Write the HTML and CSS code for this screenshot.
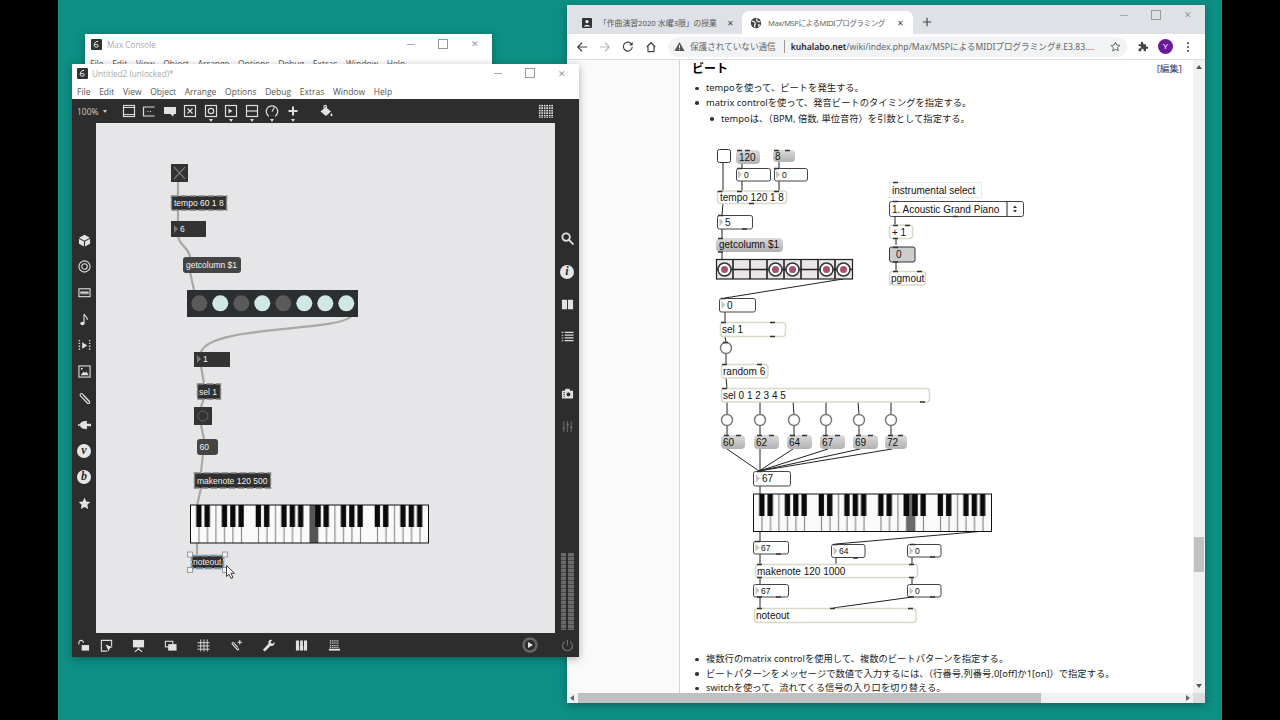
FILE: index.html
```html
<!DOCTYPE html>
<html lang="en">
<head>
    <meta charset="UTF-8">
    <meta name="viewport" content="width=device-width, initial-scale=1.0">
    <title>Max and browser</title>
    <link rel="stylesheet" href="styles.css">
</head>
<body>
    <div class="desktop">

        <!-- Max Console, mostly hidden behind the patcher -->
        <div class="window console-window">
            <div class="titlebar">
                <svg class="max-logo" viewBox="0 0 11 11"><rect width="11" height="11" rx="1"/><path d="M7 2.5C5 2 3.2 4 3.2 6.3c0 1.6 2.2 2.5 3.6 1.4 1.2-1-.1-2.8-2.6-2.2"/></svg>
                <span class="win-title">Max Console</span>
                <div class="win-controls">
                    <span class="win-min"></span><span class="win-max"></span><span class="win-close">&#x2715;</span>
                </div>
            </div>
            <div class="menubar">
                <span>File</span><span>Edit</span><span>View</span><span>Object</span><span>Arrange</span><span>Options</span><span>Debug</span><span>Extras</span><span>Window</span><span>Help</span>
            </div>
        </div>

        <!-- Browser -->
        <div class="window browser">
            <div class="tabstrip">
                <div class="tab">
                    <svg class="tab-icon" viewBox="0 0 12 12"><rect x="1" y="1" width="10" height="10" rx="1" fill="#333"/><circle cx="6" cy="4.6" r="1.6" fill="#fff"/><path d="M3 9.5c.4-2 5.6-2 6 0z" fill="#fff"/></svg>
                    <span class="tab-text">「作曲演習2020 水曜3限」の授業</span>
                    <span class="tab-close">&#x2715;</span>
                </div>
                <div class="tab active">
                    <svg class="tab-icon" viewBox="0 0 12 12"><circle cx="6" cy="6" r="5.2" fill="#444"/><path d="M2 4l2.5 1 1 2-1 1 .5 2.5M7 1.5 6.5 3.5l2 1.5 2-.5M8 7.5l1.5.5-1 2" stroke="#fff" stroke-width="1.1" fill="none"/></svg>
                    <span class="tab-text">Max/MSPによるMIDIプログラミング</span>
                    <span class="tab-close">&#x2715;</span>
                </div>
                <svg class="new-tab" viewBox="0 0 12 12"><path d="M6 1v10M1 6h10"/></svg>
                <div class="win-controls">
                    <span class="win-min"></span><span class="win-max"></span><span class="win-close">&#x2715;</span>
                </div>
            </div>

            <div class="chrome-bar">
                <svg class="nav-btn" viewBox="0 0 14 14"><path d="M13 7H2M7 2 2 7l5 5"/></svg>
                <svg class="nav-btn off" viewBox="0 0 14 14"><path d="M1 7h11M7 2l5 5-5 5"/></svg>
                <svg class="nav-btn" viewBox="0 0 14 14"><path d="M11.5 4.2A5.2 5.2 0 1 0 12 7"/><path class="solid" d="M12.5 1v4.2H8.300z"/></svg>
                <svg class="nav-btn" viewBox="0 0 14 14"><path d="M2 7l5-5 5 5M3.5 6v6.5h7V6"/></svg>
                <div class="omnibox">
                    <svg class="warn" viewBox="0 0 12 12"><path d="M6 1l5.5 10H.5z" fill="#555"/><path d="M6 4.5v3.5M6 9v1" stroke="#fff"/></svg>
                    <span class="not-secure">保護されていない通信</span>
                    <span class="omni-sep"></span>
                    <span class="url"><b>kuhalabo.net</b>/wiki/index.php/Max/MSPによるMIDIプログラミング#.E3.83....</span>
                    <svg class="omni-star" viewBox="0 0 14 14"><path d="M7 1.5l1.700 3.600 3.900.5-2.900 2.700.8 3.900L7 10.800l-3.500 1.900.8-3.900L1.400 5.600l3.900-.5z"/></svg>
                </div>
                <svg class="ext-icon" viewBox="0 0 14 14"><path d="M5 2.5a1.500 1.500 0 0 1 3 0V4h3.500v3H13a1.500 1.500 0 0 1 0 3h-1.500v3H8.500v-1.500a1.500 1.500 0 0 0-3 0V13H2V9.500h1.500a1.500 1.500 0 0 0 0-3H2V4h3z"/></svg>
                <span class="avatar">Y</span>
                <svg class="kebab" viewBox="0 0 4 14"><circle cx="2" cy="2.5" r="1.2"/><circle cx="2" cy="7" r="1.2"/><circle cx="2" cy="11.5" r="1.2"/></svg>
            </div>

            <div class="viewport">
                <div class="page">
                    <div class="wiki-side"></div>
                    <div class="article">
                        <div class="heading-row">
                            <h2>ビート</h2>
                            <span class="edit-link">[編集]</span>
                        </div>
                        <ul class="bullets">
                            <li>tempoを使って、ビートを発生する。</li>
                            <li>matrix controlを使って、発音ビートのタイミングを指定する。
                                <ul>
                                    <li>tempoは、（BPM, 倍数, 単位音符）を引数として指定する。</li>
                                </ul>
                            </li>
                        </ul>

                        <svg class="patch-shot" viewBox="680 128 512 522">
                            <defs>
                                <linearGradient id="msgFill" x1="0" y1="0" x2="0" y2="1">
                                    <stop offset="0" stop-color="#dadada"/>
                                    <stop offset="1" stop-color="#b2b2b2"/>
                                </linearGradient>
                            </defs>
                            <path class="k-cord" d="M723 162V191M742 164V168M742 181V191M779 162V168M779 181V191M723 203L722 215M722 229V238M722 252V259M843 279L725 298M725 312V322M725 337L726 342M726 354V364M726 378L727 388M727 402V414M760 402V414M793 402L794 414M826 402V414M858 402L859 414M891 402V414M727 426V435M760 426V435M794 426V435M826 426V435M859 426V435M891 426V435M727 449L759 471M760 449V471M793 449L759 471M828 449L759 471M860 449L759 471M892 449L759 471M760 486V494M760 531V541M985 531L836 544M760 554V564M836 558V564M912 557V564M760 577V584M912 577V584M760 597V608M912 597L833 608"/>

                            <rect class="k-toggle" x="717.5" y="149.5" width="13" height="13" rx="2"/>
                            <rect class="k-msg" x="736" y="150" width="24" height="14" rx="4"/><text class="k-text" x="739" y="161">120</text>
                            <rect class="k-msg" x="773" y="150" width="22" height="12" rx="4"/><text class="k-text" x="775" y="160">8</text>
                            <rect class="k-num" x="736.5" y="168.5" width="34" height="12.5" rx="2"/><path class="k-tri" d="M738 170.5l4 4-4 4z"/><text class="k-small" x="744" y="178">0</text>
                            <rect class="k-num" x="774.5" y="168.5" width="33" height="12.5" rx="2"/><path class="k-tri" d="M776 170.5l4 4-4 4z"/><text class="k-small" x="782" y="178">0</text>
                            <rect class="k-box" x="717.5" y="191" width="69" height="12.5" rx="3"/><text class="k-text" x="720" y="201">tempo 120 1 8</text>
                            <rect class="k-num" x="717.5" y="215.5" width="35" height="13.5" rx="2"/><path class="k-tri" d="M719.5 218l4 4-4 4z"/><text class="k-text" x="725" y="226">5</text>
                            <rect class="k-msg" x="716" y="238" width="67" height="14" rx="4"/><text class="k-text" x="719" y="248">getcolumn $1</text>

                            <rect class="k-matrix" x="716.5" y="259.5" width="136" height="19.5"/>
                            <path class="k-grid" d="M716.5 269.500H852.5M733 259.5V279M750 259.5V279M767 259.5V279M784 259.5V279M801 259.5V279M818 259.5V279M835 259.5V279"/>
                            <g class="k-leds">
                                <circle cx="724.5" cy="269.5" r="6.5"/><circle cx="775.5" cy="269.5" r="6.5"/><circle cx="792.5" cy="269.5" r="6.5"/><circle cx="826.5" cy="269.5" r="6.5"/><circle cx="843.5" cy="269.5" r="6.5"/>
                            </g>
                            <g class="k-leds-on">
                                <circle cx="724.5" cy="269.5" r="3.5"/><circle cx="775.5" cy="269.5" r="3.5"/><circle cx="792.5" cy="269.5" r="3.5"/><circle cx="826.5" cy="269.5" r="3.5"/><circle cx="843.5" cy="269.5" r="3.5"/>
                            </g>

                            <rect class="k-num" x="719.5" y="298.5" width="36" height="13.5" rx="2"/><path class="k-tri" d="M721.5 301l4 4-4 4z"/><text class="k-text" x="727" y="309">0</text>
                            <rect class="k-box" x="720.5" y="322.5" width="65" height="14" rx="3"/><text class="k-text" x="722" y="333">sel 1</text>
                            <circle class="k-bang" cx="726" cy="348" r="5.5"/>
                            <rect class="k-box" x="721.5" y="364.5" width="46.5" height="13.5" rx="3"/><text class="k-text" x="723" y="375">random 6</text>
                            <rect class="k-box" x="721.5" y="388.5" width="208" height="13.5" rx="3"/><text class="k-text" x="723" y="399">sel 0 1 2 3 4 5</text>

                            <circle class="k-bang" cx="727" cy="420" r="5.5"/><circle class="k-bang" cx="760" cy="420" r="5.5"/><circle class="k-bang" cx="794" cy="420" r="5.5"/><circle class="k-bang" cx="826" cy="420" r="5.5"/><circle class="k-bang" cx="859" cy="420" r="5.5"/><circle class="k-bang" cx="891" cy="420" r="5.5"/>

                            <rect class="k-msg" x="721" y="435" width="24" height="14" rx="4"/><text class="k-text" x="723" y="446">60</text>
                            <rect class="k-msg" x="754" y="435" width="25" height="14" rx="4"/><text class="k-text" x="756" y="446">62</text>
                            <rect class="k-msg" x="787" y="435" width="25" height="14" rx="4"/><text class="k-text" x="789" y="446">64</text>
                            <rect class="k-msg" x="820" y="435" width="25" height="14" rx="4"/><text class="k-text" x="822" y="446">67</text>
                            <rect class="k-msg" x="853" y="435" width="25" height="14" rx="4"/><text class="k-text" x="855" y="446">69</text>
                            <rect class="k-msg" x="885" y="435" width="22" height="14" rx="4"/><text class="k-text" x="887" y="446">72</text>

                            <rect class="k-num" x="753.5" y="471.5" width="37" height="14.5" rx="2"/><path class="k-tri" d="M756 474.5l4 4-4 4z"/><text class="k-text" x="762" y="482">67</text>

                            <g transform="translate(753.5 494)">
                                <rect class="key-bed" width="238" height="37.5"/>
                                <rect class="key-down" x="153" width="8.5" height="37.5"/>
                                <path d="M150.3 0h5.300v22h-5.300zM158.700 0h5.300v22h-5.300z" fill="#0a0a0a"/>
                                <rect class="key-frame" width="238" height="37.5"/>
                            </g>

                            <rect class="k-num" x="753.5" y="541.5" width="35" height="12.5" rx="2"/><path class="k-tri" d="M755.5 543.5l4 4-4 4z"/><text class="k-small" x="761" y="551">67</text>
                            <rect class="k-num" x="831.5" y="544.5" width="33.5" height="13" rx="2"/><path class="k-tri" d="M833.5 547l4 4-4 4z"/><text class="k-small" x="839" y="554">64</text>
                            <rect class="k-num" x="907.5" y="544.5" width="33.5" height="12.5" rx="2"/><path class="k-tri" d="M909.5 547l4 4-4 4z"/><text class="k-small" x="915" y="554">0</text>
                            <rect class="k-box" x="755.5" y="564.5" width="162" height="13" rx="3"/><text class="k-text" x="757" y="574.5">makenote 120 1000</text>
                            <rect class="k-num" x="753.5" y="584.5" width="35" height="12.5" rx="2"/><path class="k-tri" d="M755.5 586.5l4 4-4 4z"/><text class="k-small" x="761" y="594">67</text>
                            <rect class="k-num" x="907.5" y="584.5" width="33.5" height="12.5" rx="2"/><path class="k-tri" d="M909.5 587l4 4-4 4z"/><text class="k-small" x="915" y="594">0</text>
                            <rect class="k-box" x="754.5" y="608.5" width="161.5" height="14" rx="3"/><text class="k-text" x="756" y="619">noteout</text>

                            <path class="k-ports" d="M717.5 191.5h5M737 191.5h5M774 191.5h5M737 150.5h5M745 150.5h5M774 150.5h5M785 150.5h5M737 168.5h5M774 168.5h5M749 203.5h5M718 215.5h5M742 229h5M718 238.5h5M718 252h5M721 298.5h5M721 322.5h5M770 322.5h5M770 336.5h5M723 342.5h5M722 364.5h5M757 364.5h5M722 388.5h5M920 402h5M724 435.5h5M736 435.5h5M757 435.5h5M769 435.5h5M790 435.5h5M802 435.5h5M823 435.5h5M835 435.5h5M856 435.5h5M868 435.5h5M888 435.5h5M898 435.5h5M757 471.5h5M755 541.5h5M776 554h5M833 544.5h5M853 558h5M910 544.5h5M930 557h5M757 564.5h5M909 564.5h5M757 577.5h5M909 577.5h5M757 597h5M776 597h5M909 597h5M930 597h5M757 608.5h5M830 608.5h5M908 608.5h5"/>

                            <rect class="k-comment" x="889.5" y="182.5" width="92" height="15"/><text class="k-text" x="892" y="194">instrumental select</text>
                            <rect class="k-num" x="889.5" y="201.5" width="134" height="15" rx="2"/><text class="k-text" x="892" y="212.5">1. Acoustic Grand Piano</text>
                            <path class="k-cord" d="M1007 201.5V216.5M895 216.5V225M896 238V245M896 262V271"/>
                            <path class="k-spin" d="M1015 205.5l-2 2.5h4zM1015 212.5l-2-2.5h4z"/>
                            <rect class="k-box" x="889.5" y="225" width="23" height="13.5" rx="3"/><text class="k-text" x="892" y="235.5">+ 1</text>
                            <rect class="k-gray-num" x="889.5" y="247" width="25.5" height="15" rx="2"/><text class="k-text" x="896" y="258">0</text>
                            <rect class="k-box" x="889.5" y="271.5" width="36" height="13.5" rx="3"/><text class="k-text" x="891" y="282">pgmout</text>
                            <path class="k-ports" d="M893 182.5h5M893 201.5h5M953 216.5h5M893 225.5h5M905 225.5h5M893 238.5h5M893 247.5h5M893 262h5M893 271.5h5M917 271.5h5"/>
                        </svg>

                        <ul class="bullets">
                            <li>複数行のmatrix controlを使用して、複数のビートパターンを指定する。</li>
                            <li>ビートパターンをメッセージで数値で入力するには、（行番号,列番号,0[off]か1[on]）で指定する。</li>
                            <li>switchを使って、流れてくる信号の入り口を切り替える。</li>
                        </ul>
                    </div>
                </div>
                <div class="v-scroll">
                    <span class="arrow-up"></span>
                    <span class="v-thumb"></span>
                    <span class="arrow-down"></span>
                </div>
                <div class="h-scroll">
                    <span class="arrow-left"></span>
                    <span class="h-thumb"></span>
                    <span class="arrow-right"></span>
                </div>
                <div class="scroll-corner"></div>
            </div>
        </div>

        <!-- Max patcher window -->
        <div class="window patcher">
            <div class="titlebar">
                <svg class="max-logo" viewBox="0 0 11 11"><rect width="11" height="11" rx="1"/><path d="M7 2.5C5 2 3.2 4 3.2 6.3c0 1.6 2.2 2.5 3.6 1.4 1.2-1-.1-2.8-2.6-2.2"/></svg>
                <span class="win-title">Untitled2 (unlocked)*</span>
                <div class="win-controls">
                    <span class="win-min"></span><span class="win-max"></span><span class="win-close">&#x2715;</span>
                </div>
            </div>
            <div class="menubar">
                <span>File</span><span>Edit</span><span>View</span><span>Object</span><span>Arrange</span><span>Options</span><span>Debug</span><span>Extras</span><span>Window</span><span>Help</span>
            </div>

            <div class="toolbar">
                <span class="zoom-label">100%</span>
                <span class="zoom-caret"></span>
                <div class="tools">
                    <span class="tool"><svg viewBox="0 0 14 14"><rect class="ln" x="1.5" y="1.5" width="11" height="11"/><path class="ln" d="M1.5 3.5h11M1.5 10.5h11"/></svg></span>
                    <span class="tool"><svg viewBox="0 0 14 14"><path class="ln" d="M12.5 3H1.5v9h11"/><path class="ln thin" d="M5.5 7.5h1M8 7.5h1"/></svg></span>
                    <span class="tool"><svg viewBox="0 0 14 14"><path class="fl" d="M1 3h12v7h-2l-1 2.5L7.5 10H1z"/></svg></span>
                    <span class="tool"><svg viewBox="0 0 14 14"><rect class="ln" x="1.5" y="1.5" width="11" height="11"/><path class="ln" d="M4.500 4.500l5 5M9.500 4.500l-5 5"/></svg></span>
                    <span class="tool more"><svg viewBox="0 0 14 14"><rect class="ln" x="1.5" y="1.5" width="11" height="11"/><circle class="ln" cx="7" cy="7" r="2.7"/></svg></span>
                    <span class="tool more"><svg viewBox="0 0 14 14"><rect class="ln" x="1.5" y="1.5" width="11" height="11"/><path class="fl" d="M4.5 4.5l4 2.5-4 2.5z"/></svg></span>
                    <span class="tool more"><svg viewBox="0 0 14 14"><rect class="ln" x="1.5" y="1.5" width="11" height="11"/><path class="ln" d="M1.5 7h11"/></svg></span>
                    <span class="tool more"><svg viewBox="0 0 14 14"><path class="ln" d="M3.8 12.2a5.7 5.7 0 1 1 6.4 0"/><path class="ln" d="M7 7.5 9.3 3.5"/></svg></span>
                    <span class="tool more"><svg viewBox="0 0 14 14"><path class="ln heavy" d="M7 2.5v9M2.5 7h9"/></svg></span>
                </div>
                <span class="tool paint"><svg viewBox="0 0 14 14"><path class="ln" d="M5 4V2.5c0-1.5 2.5-1.5 2.5 0V5"/><path class="fl" d="M6.5 3 12 7.5 7 12 1.5 7.5z"/><path class="fl" d="M12.5 9c.6 1 1 1.5 1 2.2a1 1 0 0 1-2 0c0-.7.4-1.2 1-2.200z"/></svg></span>
                <span class="matrix-icon"></span>
            </div>

            <div class="patcher-main">
                <div class="side-left">
                    <span class="side-icon"><svg viewBox="0 0 14 14"><path class="fl" d="M7 .8 1.2 4 7 7.2 12.800 4zM1 5v5.500l5.400 3V8zM13 5v5.500l-5.400 3V8z"/></svg></span>
                    <span class="side-icon"><svg viewBox="0 0 14 14"><circle class="ln" cx="7" cy="7" r="6"/><circle class="ln" cx="7" cy="7" r="3"/></svg></span>
                    <span class="side-icon"><svg viewBox="0 0 14 14"><rect class="ln" x="1" y="3" width="12" height="8.5"/><path class="fl dim" d="M2.5 5.5h9v3.500h-9z"/><path class="fl" d="M2.5 6.700h9v1h-9z"/></svg></span>
                    <span class="side-icon"><svg viewBox="0 0 14 14"><ellipse class="fl" cx="4.8" cy="11.3" rx="2.3" ry="1.9"/><path class="ln" d="M6.5 11V1c.5 2.500 4 3 3.500 6.500"/></svg></span>
                    <span class="side-icon"><svg viewBox="0 0 14 14"><path class="fl" d="M4.500 3.500 10 7l-5.500 3.500z"/><path class="ln dash" d="M1.5 1v12M12.5 1v12"/></svg></span>
                    <span class="side-icon"><svg viewBox="0 0 14 14"><rect class="ln" x="1" y="1" width="12" height="12"/><path class="fl" d="M3 11l3-4 1.500 1.500L9 7l2.500 4z"/><circle class="fl" cx="4" cy="4" r="1"/></svg></span>
                    <span class="side-icon"><svg viewBox="0 0 14 14"><path class="ln" d="M12.3 11 5 3.300C3.500 1.800 1.300 3.800 2.800 5.400l7.500 7.800c1.200 1.200 3-.6 1.800-1.900L5.500 4.500"/></svg></span>
                    <span class="side-icon"><svg viewBox="0 0 14 14"><path class="fl" d="M14 6.200H9.500V3L6 3.500C3.500 4 2.500 5.500 2.300 6.700H0v1.600h2.300C2.500 9.500 3.500 11 6 11.500l3.500.5V8.800H14z"/></svg></span>
                    <span class="side-icon"><span class="letter-disc">v</span></span>
                    <span class="side-icon"><span class="letter-disc">b</span></span>
                    <span class="side-icon"><svg viewBox="0 0 14 14"><path class="fl" d="M7 .8l1.900 4 4.400.6-3.200 3 .8 4.400L7 10.700l-3.900 2.100.8-4.400-3.200-3 4.400-.6z"/></svg></span>
                </div>

                <div class="canvas">
                    <svg class="patch-live" viewBox="96 123 459 510">
                        <defs>
                            <pattern id="octave" patternUnits="userSpaceOnUse" width="59.5" height="38">
                                <rect width="59.5" height="38" fill="#fafafa"/>
                                <path class="key-line" d="M8.500 0V38M17 0V38M25.500 0V38M34 0V38M42.500 0V38M51 0V38"/>
                                <path d="M5.700 0h5.300v22H5.700zM14 0h5.400v22H14zM31.300 0h5.300v22h-5.300zM39.700 0h5.300v22h-5.300zM48 0h5.300v22H48z" fill="#0a0a0a"/>
                            </pattern>
                        </defs>

                        <path class="g-cord" d="M178 180V195M178 210V221M178 236C180 247 189 247 190 257M190 272L194 290M351 316C340 332 210 325 201 352M201 366L204 383M204 398L201 407M201 425L204 439M203 454L201 472M201 488L197 506M197 541V555"/>

                        <rect class="d-obj" x="171" y="164" width="17" height="18"/>
                        <path class="x-mark" d="M174 167l11 12M185 167l-11 12"/>

                        <rect class="d-box" x="171.5" y="196" width="55" height="14"/><text class="d-text" x="174" y="206">tempo 60 1 8</text>
                        <rect class="d-obj" x="171" y="221" width="35" height="16"/><path class="d-tri" d="M174 225l4 4-4 4z"/><text class="d-text" x="180" y="232">6</text>
                        <rect class="d-msg" x="183" y="257" width="58" height="16" rx="3"/><text class="d-text" x="186" y="268">getcolumn $1</text>

                        <rect class="d-matrix" x="187" y="290" width="171" height="27"/>
                        <g class="led-off">
                            <circle cx="199.3" cy="303.3" r="8"/><circle cx="241.3" cy="303.3" r="8"/><circle cx="283.3" cy="303.3" r="8"/>
                        </g>
                        <g class="led-on">
                            <circle cx="220.3" cy="303.3" r="8"/><circle cx="262.3" cy="303.3" r="8"/><circle cx="304.3" cy="303.3" r="8"/><circle cx="325.3" cy="303.3" r="8"/><circle cx="346.3" cy="303.3" r="8"/>
                        </g>

                        <rect class="d-obj" x="194" y="352" width="36" height="15"/><path class="d-tri" d="M197 355l4 4-4 4z"/><text class="d-text" x="203" y="362">1</text>
                        <rect class="d-box" x="197.5" y="384" width="23" height="15"/><text class="d-text" x="199" y="394.5">sel 1</text>
                        <rect class="d-obj" x="194" y="407" width="18" height="18"/><circle class="d-bang" cx="203" cy="416" r="5"/>
                        <rect class="d-msg" x="197" y="439" width="21" height="16" rx="3"/><text class="d-text" x="199.5" y="450">60</text>
                        <rect class="d-box" x="194.5" y="473" width="76" height="15"/><text class="d-text" x="197" y="483.5">makenote 120 500</text>

                        <g transform="translate(190.5 505)">
                            <rect class="key-bed" width="238" height="38"/>
                            <rect class="key-pressed" x="119" width="8.5" height="38"/>
                            <path d="M124.700 0h5.300v22h-5.300z" fill="#0a0a0a"/>
                            <rect class="key-frame" width="238" height="38"/>
                        </g>

                        <rect class="sel-ring" x="190" y="554" width="35" height="16"/>
                        <rect class="d-box" x="192" y="556" width="31" height="12"/>
                        <text class="d-text" x="193" y="565">noteout</text>
                        <rect class="sel-handle" x="187.5" y="552" width="5" height="5"/>
                        <rect class="sel-handle" x="222.5" y="552" width="5" height="5"/>
                        <rect class="sel-handle" x="187.5" y="567.5" width="5" height="5"/>
                        <rect class="sel-handle" x="222.5" y="567.5" width="5" height="5"/>
                        <path class="pointer" d="M226.5 565.5v11l2.5-2.3 2 4.3 2-1-2-4.2h3.5z"/>
                    </svg>
                </div>

                <div class="side-right">
                    <span class="rail-icon"><svg viewBox="0 0 14 14"><circle class="ln heavy" cx="5.5" cy="5.5" r="4"/><path class="ln heavy" d="M8.5 8.5l5 5"/></svg></span>
                    <span class="rail-icon"><span class="letter-disc info">i</span></span>
                    <span class="rail-icon"><svg viewBox="0 0 14 14"><path class="fl" d="M1 2h5.500v10H1zM7.500 2H13v10H7.500z"/></svg></span>
                    <span class="rail-icon"><svg viewBox="0 0 14 14"><path class="ln list" d="M4 2.500h9.500M4 5.500h9.500M4 8.500h9.500M4 11.500h9.500"/><path class="fl" d="M.8 2h1.700v1.200H.8zM.8 5h1.700v1.200H.8zM.8 8h1.700v1.200H.8zM.8 11h1.700v1.200H.8z"/></svg></span>
                    <span class="rail-gap"></span>
                    <span class="rail-icon"><svg viewBox="0 0 14 14"><path class="fl" d="M1 4h3l1-2h4l1 2h3v8.500H1z"/><circle class="cutout" cx="8" cy="8" r="2.6"/><path class="cutout-ln" d="M2.500 6h1.500M2.500 8h1.500M2.500 10h1.500"/></svg></span>
                    <span class="rail-icon faint"><svg viewBox="0 0 14 14"><path class="ln" d="M3 1v12M7 1v12M11 1v12"/><path class="fl" d="M1.500 8h3v2h-3zM5.500 4h3v2h-3zM9.500 7h3v2h-3z"/></svg></span>
                    <div class="meters"><span></span><span></span></div>
                </div>
            </div>

            <div class="bottombar">
                <span class="bot-first"><svg viewBox="0 0 14 14"><path class="ln" d="M2 6V4a2.500 2.500 0 0 1 5 0"/><path class="fl" d="M5 6.500h8v6H5z"/></svg></span>
                <span class="bot-first"><svg viewBox="0 0 14 14"><path class="ln" d="M8 13H1.500V1.500h11V8"/><path class="fl" d="M6 6l7.500 3-3 1-1 3.500z"/></svg></span>
                <span class="bot-tool"><svg viewBox="0 0 14 14"><path class="fl" d="M1 1h12v8H1z"/><path class="ln" d="M7 9v1.500L3 14M7 10.500 11 14"/></svg></span>
                <span class="bot-tool"><svg viewBox="0 0 14 14"><rect class="ln" x="1.5" y="2.5" width="8" height="6"/><path class="fl" d="M4.500 5.500h9v7h-9z"/></svg></span>
                <span class="bot-tool"><svg viewBox="0 0 14 14"><path class="ln thin" d="M4 .5v13M7.500 .5v13M11 .5v13M.5 4h13M.5 7.500h13M.5 11h13"/></svg></span>
                <span class="bot-tool"><svg viewBox="0 0 14 14"><path class="ln" d="M8.500 9 4 4.200C3 3.200 1.500 4.500 2.500 5.500l5.300 5.800c.9.900 2.100-.3 1.300-1.200"/><path class="ln" d="M10.500 1v5M8 3.500h5"/></svg></span>
                <span class="bot-tool"><svg viewBox="0 0 14 14"><path class="fl" d="M13.500 3.200 11 5.500 9 3.500 11 1C8.500.2 6.200 2 7 5L1 11.500 3 13.500 9 7.500c3 .8 5-1.500 4.500-4.300z"/></svg></span>
                <span class="bot-tool"><svg viewBox="0 0 14 14"><path class="fl" d="M1 1.500h3.500v11H1zM5.300 1.500h3.400v11H5.300zM9.500 1.500H13v11H9.500z"/><path class="key-slit" d="M4.900 1.500v6M9.100 1.500v6"/></svg></span>
                <span class="bot-tool"><svg viewBox="0 0 14 14"><path class="ln dots" d="M2 2h10M2 4.500h10M2 7h10M2 9h10"/><path class="fl" d="M1 10.500h12v2H1z"/></svg></span>
                <span class="bot-play"><svg viewBox="0 0 16 16"><circle class="ln ring" cx="8" cy="8" r="6.5"/><path class="fl" d="M6 5l5 3-5 3z"/></svg></span>
                <span class="bot-power"><svg viewBox="0 0 14 14"><path class="ln" d="M4 3a5.300 5.300 0 1 0 6 0M7 1v6"/></svg></span>
            </div>
        </div>
    </div>
</body>
</html>
```

FILE: styles.css
```css
* {
    box-sizing: border-box;
}

body {
    margin: 0;
    background: #000;
    font-family: "Liberation Sans", Arial, sans-serif;
    overflow: hidden;
}

.desktop {
    position: relative;
    width: 1164px;
    height: 720px;
    margin-left: 58px;
    background: #0d8f84;
    overflow: hidden;
}

/* windows sit on the desktop at their own place */
.window {
    position: absolute;
    display: flex;
    flex-direction: column;
    background: #fff;
    box-shadow: 0 2px 8px rgba(0, 0, 0, 0.3);
}

.console-window {
    left: 27px;
    top: 34px;
    width: 407px;
    height: 40px;
}

.patcher {
    left: 14px;
    top: 64px;
    width: 507px;
    height: 593px;
    font-family: "Open Sans", sans-serif;
}

.browser {
    left: 509px;
    top: 5px;
    width: 638px;
    height: 698px;
}

/* Max title + menu */
.titlebar {
    display: flex;
    align-items: center;
    height: 18px;
    flex: none;
    padding-left: 5px;
}

.console-window .titlebar {
    height: 20px;
    padding-left: 6px;
}

.console-window .max-logo {
    margin-right: 5px;
}

.max-logo {
    width: 11px;
    height: 11px;
    margin-right: 4px;
    fill: #333;
}

.max-logo path {
    fill: none;
    stroke: #fff;
    stroke-width: 1;
}

.win-title {
    font-family: "Open Sans", sans-serif;
    font-size: 8.2px;
    color: #a9a9a9;
}

.win-controls {
    display: flex;
    margin-left: auto;
    padding-right: 1px;
    align-items: center;
}

.win-controls span {
    display: flex;
    align-items: center;
    justify-content: center;
    width: 32px;
    height: 10px;
    color: #999;
    font-size: 9px;
}

.win-min::before {
    content: "";
    width: 8px;
    height: 1px;
    background: #aaa;
}

.win-max::before {
    content: "";
    width: 8px;
    height: 8px;
    border: 1px solid #999;
}

.menubar {
    display: flex;
    align-items: center;
    gap: 8.7px;
    height: 17px;
    padding: 2px 0 0 5px;
    flex: none;
    font-family: "Open Sans", sans-serif;
    font-size: 8.5px;
    color: #555;
}

/* Max top toolbar */
.toolbar {
    display: flex;
    align-items: center;
    height: 24px;
    flex: none;
    padding-left: 5px;
    background: #2d2d2d;
    color: #ddd;
}

.zoom-label {
    font-size: 8.5px;
    color: #ccc;
}

.zoom-caret {
    width: 0;
    height: 0;
    margin-left: 4px;
    border-left: 2px solid transparent;
    border-right: 2px solid transparent;
    border-top: 3px solid #ccc;
}

.tools {
    display: flex;
    margin-left: 12px;
}

.tool {
    position: relative;
    display: flex;
    align-items: center;
    justify-content: center;
    width: 20.5px;
    height: 24px;
}

.tool svg {
    width: 14px;
    height: 14px;
}

.tool.more::after {
    content: "";
    position: absolute;
    left: 8px;
    bottom: 1px;
    border-left: 2.5px solid transparent;
    border-right: 2.5px solid transparent;
    border-top: 3px solid #ddd;
}

.tool.paint {
    margin-left: 13px;
}

.matrix-icon {
    width: 15px;
    height: 14px;
    margin-left: auto;
    margin-right: 26px;
    background-color: #ddd;
    background-image:
        linear-gradient(90deg, #2d2d2d 1px, transparent 1px),
        linear-gradient(#2d2d2d 1px, transparent 1px);
    background-size: 2.5px 2.5px;
}

/* shared icon parts */
.ln {
    fill: none;
    stroke: #ddd;
    stroke-width: 1.2;
}

.ln.thin {
    stroke-width: 1;
}

.ln.heavy {
    stroke-width: 2;
}

.ln.dash {
    stroke-dasharray: 1.5 1.5;
    stroke-width: 1.5;
}

.ln.dots {
    stroke-dasharray: 1.2 .8;
}

.ln.list {
    stroke-width: 1.3;
}

.ln.ring {
    stroke: #666;
    stroke-width: 2.5;
}

.fl {
    fill: #e2e2e2;
}

.fl.dim {
    fill: #999;
}

.cutout {
    fill: #2d2d2d;
    stroke: #e2e2e2;
}

.cutout-ln {
    stroke: #2d2d2d;
    fill: none;
}

.key-slit {
    stroke: #2d2d2d;
    stroke-width: 1.2;
    fill: none;
}

/* Max body */
.patcher-main {
    display: flex;
    flex: 1;
    min-height: 0;
}

.side-left,
.side-right {
    display: flex;
    flex-direction: column;
    align-items: center;
    width: 24px;
    flex: none;
    background: #2d2d2d;
}

.side-left {
    padding-top: 104px;
}

.side-icon {
    display: flex;
    align-items: center;
    justify-content: center;
    height: 26.3px;
}

.side-icon svg,
.rail-icon svg {
    width: 13px;
    height: 13px;
}

.letter-disc {
    display: flex;
    align-items: center;
    justify-content: center;
    width: 14px;
    height: 14px;
    border-radius: 50%;
    background: #e6e6e6;
    color: #2d2d2d;
    font-family: "Liberation Serif", serif;
    font-size: 12px;
    font-style: italic;
    font-weight: bold;
}

.side-right {
    padding-top: 99.5px;
}

.rail-icon {
    display: flex;
    align-items: center;
    justify-content: center;
    height: 32.7px;
}

.rail-gap {
    height: 24px;
}

.rail-icon.faint {
    opacity: 0.3;
}

.meters {
    display: flex;
    gap: 2px;
    margin-top: 110px;
}

.meters span {
    width: 5.5px;
    height: 77px;
    background: repeating-linear-gradient(#6a6a6a 0 3px, #4a4a4a 3px 4px);
}

.canvas {
    flex: 1;
    background: #e6e6e9;
}

.patch-live {
    display: block;
    width: 459px;
    height: 510px;
}

.bottombar {
    display: flex;
    align-items: center;
    height: 24px;
    flex: none;
    background: #2d2d2d;
}

.bottombar span {
    display: flex;
    align-items: center;
    justify-content: center;
}

.bottombar svg {
    width: 13px;
    height: 13px;
}

.bot-first {
    width: 23px;
}

.bot-tool {
    width: 32.7px;
}

.bot-first + .bot-tool {
    margin-left: 3.7px;
}

.bot-play {
    width: 24px;
    margin-left: auto;
    margin-right: 13px;
}

.bot-play svg {
    width: 16px;
    height: 16px;
}

.bot-power {
    width: 24px;
    opacity: 0.4;
}

.g-cord {
    fill: none;
    stroke: #a8a8a8;
    stroke-width: 2.2;
}

.d-obj {
    fill: #333;
}

.d-box {
    fill: #2f2f2f;
    stroke: #808080;
    stroke-width: 1.5;
    stroke-dasharray: 7 2;
}

.d-msg {
    fill: #444;
}

.d-text {
    fill: #f2f2f2;
    font-family: "Liberation Sans", Arial, sans-serif;
    font-size: 8.5px;
}

.d-tri {
    fill: #777;
}

.d-bang {
    fill: none;
    stroke: #666;
}

.x-mark {
    stroke: #777;
    stroke-width: 1.2;
}

.d-matrix {
    fill: #2c2f30;
}

.led-off {
    fill: #5a5a5a;
}

.led-on {
    fill: #cfe8e6;
}

.key-bed {
    fill: url(#octave);
}

.key-line {
    stroke: #777;
    stroke-width: 1;
    fill: none;
}

.key-frame {
    fill: none;
    stroke: #111;
    stroke-width: 1;
}

.key-pressed {
    fill: #555;
}

.key-down {
    fill: #6a6a6a;
}

.sel-ring {
    fill: #b4d0e6;
}

.sel-handle {
    fill: #f2f2f2;
    stroke: #888;
    stroke-width: 0.8;
}

.pointer {
    fill: #fff;
    stroke: #111;
    stroke-width: 0.8;
}

/* Chrome */
.tabstrip {
    display: flex;
    align-items: flex-end;
    height: 29px;
    flex: none;
    padding-left: 10px;
    background: #dee1e6;
    color: #555;
}

.tabstrip .win-controls {
    align-self: flex-start;
    margin-top: 5px;
}

.tab {
    display: flex;
    align-items: center;
    height: 23px;
    width: 165px;
    padding-left: 4px;
    font-family: "Noto Sans", "Noto Sans CJK JP", sans-serif;
    font-size: 7.8px;
}

.tab.active {
    width: 171px;
    padding-left: 8px;
    background: #fff;
    border-radius: 7px 7px 0 0;
}

.tab-icon {
    width: 12px;
    height: 12px;
    flex: none;
    margin-right: 6px;
}

.tab-text {
    white-space: nowrap;
    width: 125px;
}

.tab.active .tab-text {
    width: 126px;
    font-size: 7.5px;
    letter-spacing: -0.4px;
    color: #666;
}

.tab-close {
    font-size: 8px;
    margin-left: 3px;
    color: #444;
}

.new-tab {
    width: 10px;
    height: 10px;
    margin: 0 0 7px 9px;
    fill: none;
    stroke: #444;
    stroke-width: 1.4;
}

.chrome-bar {
    display: flex;
    align-items: center;
    height: 26px;
    flex: none;
    padding-left: 9px;
    background: #fff;
    border-bottom: 1px solid #dcdcdc;
}

.nav-btn {
    width: 12px;
    height: 12px;
    margin-right: 11px;
    fill: none;
    stroke: #444;
    stroke-width: 1.4;
}

.nav-btn.off {
    stroke: #bbb;
}

.nav-btn .solid {
    fill: #444;
    stroke: none;
}

.omnibox {
    display: flex;
    align-items: center;
    width: 459px;
    height: 20px;
    padding-left: 6px;
    background: #f1f3f4;
    border-radius: 10px;
    font-family: "Noto Sans", "Noto Sans CJK JP", sans-serif;
    white-space: nowrap;
}

.warn {
    width: 11px;
    height: 11px;
    flex: none;
    margin-right: 5px;
}

.not-secure {
    font-size: 8.6px;
    color: #666;
}

.omni-sep {
    width: 1px;
    height: 13px;
    margin: 0 6px 0 8px;
    background: #999;
}

.url {
    width: 305px;
    overflow: hidden;
    font-size: 8.6px;
    color: #666;
}

.url b {
    font-weight: 600;
    color: #222;
}

.omni-star {
    width: 11px;
    height: 11px;
    margin-left: 14px;
    fill: none;
    stroke: #444;
}

.ext-icon {
    width: 11px;
    height: 11px;
    margin-left: 10px;
    fill: #444;
}

.avatar {
    display: flex;
    align-items: center;
    justify-content: center;
    width: 15px;
    height: 15px;
    margin-left: 10px;
    border-radius: 50%;
    background: #6a1b9a;
    color: #fff;
    font-size: 8px;
}

.kebab {
    width: 4px;
    height: 12px;
    margin-left: 13px;
    fill: #444;
}

.viewport {
    display: grid;
    grid-template-columns: 1fr 12px;
    grid-template-rows: 1fr 10px;
    flex: 1;
    min-height: 0;
}

.page {
    display: flex;
    min-width: 0;
    overflow: hidden;
}

.wiki-side {
    width: 113px;
    flex: none;
    background: #fbfafb;
    border-right: 1px solid #d4d4d4;
}

.article {
    flex: 1;
    min-width: 0;
    padding: 1px 0 0 12px;
    font-family: "Noto Sans", "Noto Sans CJK JP", sans-serif;
    font-size: 9.3px;
    color: #222;
}

.heading-row {
    display: flex;
    align-items: center;
    justify-content: space-between;
    height: 14px;
    padding-right: 11px;
}

.heading-row h2 {
    margin: 0;
    font-size: 12px;
    font-weight: bold;
    color: #000;
}

.edit-link {
    font-size: 9.5px;
    color: #3a3a70;
}

.bullets {
    margin: 6px 0 0;
    padding: 0 0 0 14px;
    list-style: none;
    line-height: 14.5px;
    white-space: nowrap;
}

.bullets ul {
    margin: 1.5px 0 0;
    padding-left: 15px;
    list-style: none;
}

/* small round bullet, closer to the text than the default disc */
.bullets li {
    position: relative;
}

.bullets li::before {
    content: "";
    position: absolute;
    left: -11px;
    top: 5.5px;
    width: 3.5px;
    height: 3.5px;
    border-radius: 50%;
    background: #333;
}

.patch-shot {
    display: block;
    width: 512px;
    height: 522px;
    margin: 2px 0 0 -12px;
}

.patch-shot + .bullets {
    margin-top: 2px;
}

.k-cord {
    fill: none;
    stroke: #222;
    stroke-width: 1;
}

.k-ports {
    fill: none;
    stroke: #333;
    stroke-width: 1.4;
}

.k-text,
.k-small {
    fill: #111;
    font-family: "Liberation Sans", Arial, sans-serif;
    font-size: 10px;
}

.k-small {
    font-size: 8.5px;
}

.k-toggle {
    fill: #fff;
    stroke: #333;
}

.k-msg {
    fill: url(#msgFill);
}

.k-gray-num {
    fill: #cdcdcd;
    stroke: #333;
}

.k-num {
    fill: #fff;
    stroke: #444;
}

.k-tri {
    fill: #c4c4c4;
}

.k-box {
    fill: #fff;
    stroke: #d9d9c8;
    stroke-width: 1.5;
}

.k-comment {
    fill: #fff;
    stroke: #e8e8e8;
}

.k-spin {
    fill: #333;
}

.k-matrix {
    fill: #e9e5e8;
    stroke: #222;
    stroke-width: 1.2;
}

.k-grid {
    fill: none;
    stroke: #222;
    stroke-width: 1.6;
}

.k-leds {
    fill: #fff;
    stroke: #333;
    stroke-width: 1.5;
}

.k-leds-on {
    fill: #a8506e;
}

.k-bang {
    fill: #fff;
    stroke: #777;
    stroke-width: 1.4;
}

.v-scroll {
    display: flex;
    flex-direction: column;
    align-items: center;
    background: #f1f1f1;
}

.arrow-up {
    margin-top: 5px;
    border-left: 3px solid transparent;
    border-right: 3px solid transparent;
    border-bottom: 4px solid #555;
}

.v-thumb {
    width: 10px;
    height: 35px;
    margin-top: 468px;
    background: #c1c1c1;
}

.arrow-down {
    margin-top: auto;
    margin-bottom: 5px;
    border-left: 3px solid transparent;
    border-right: 3px solid transparent;
    border-top: 4px solid #555;
}

.h-scroll {
    display: flex;
    align-items: center;
    background: #f1f1f1;
}

.arrow-left {
    margin-left: 3px;
    border-top: 3px solid transparent;
    border-bottom: 3px solid transparent;
    border-right: 4px solid #666;
}

.h-thumb {
    width: 463px;
    height: 10px;
    margin-left: 4px;
    background: #c1bfc0;
}

.arrow-right {
    margin-left: auto;
    margin-right: 3px;
    border-top: 3px solid transparent;
    border-bottom: 3px solid transparent;
    border-left: 4px solid #666;
}

.scroll-corner {
    background: #dcdcdc;
}
```
